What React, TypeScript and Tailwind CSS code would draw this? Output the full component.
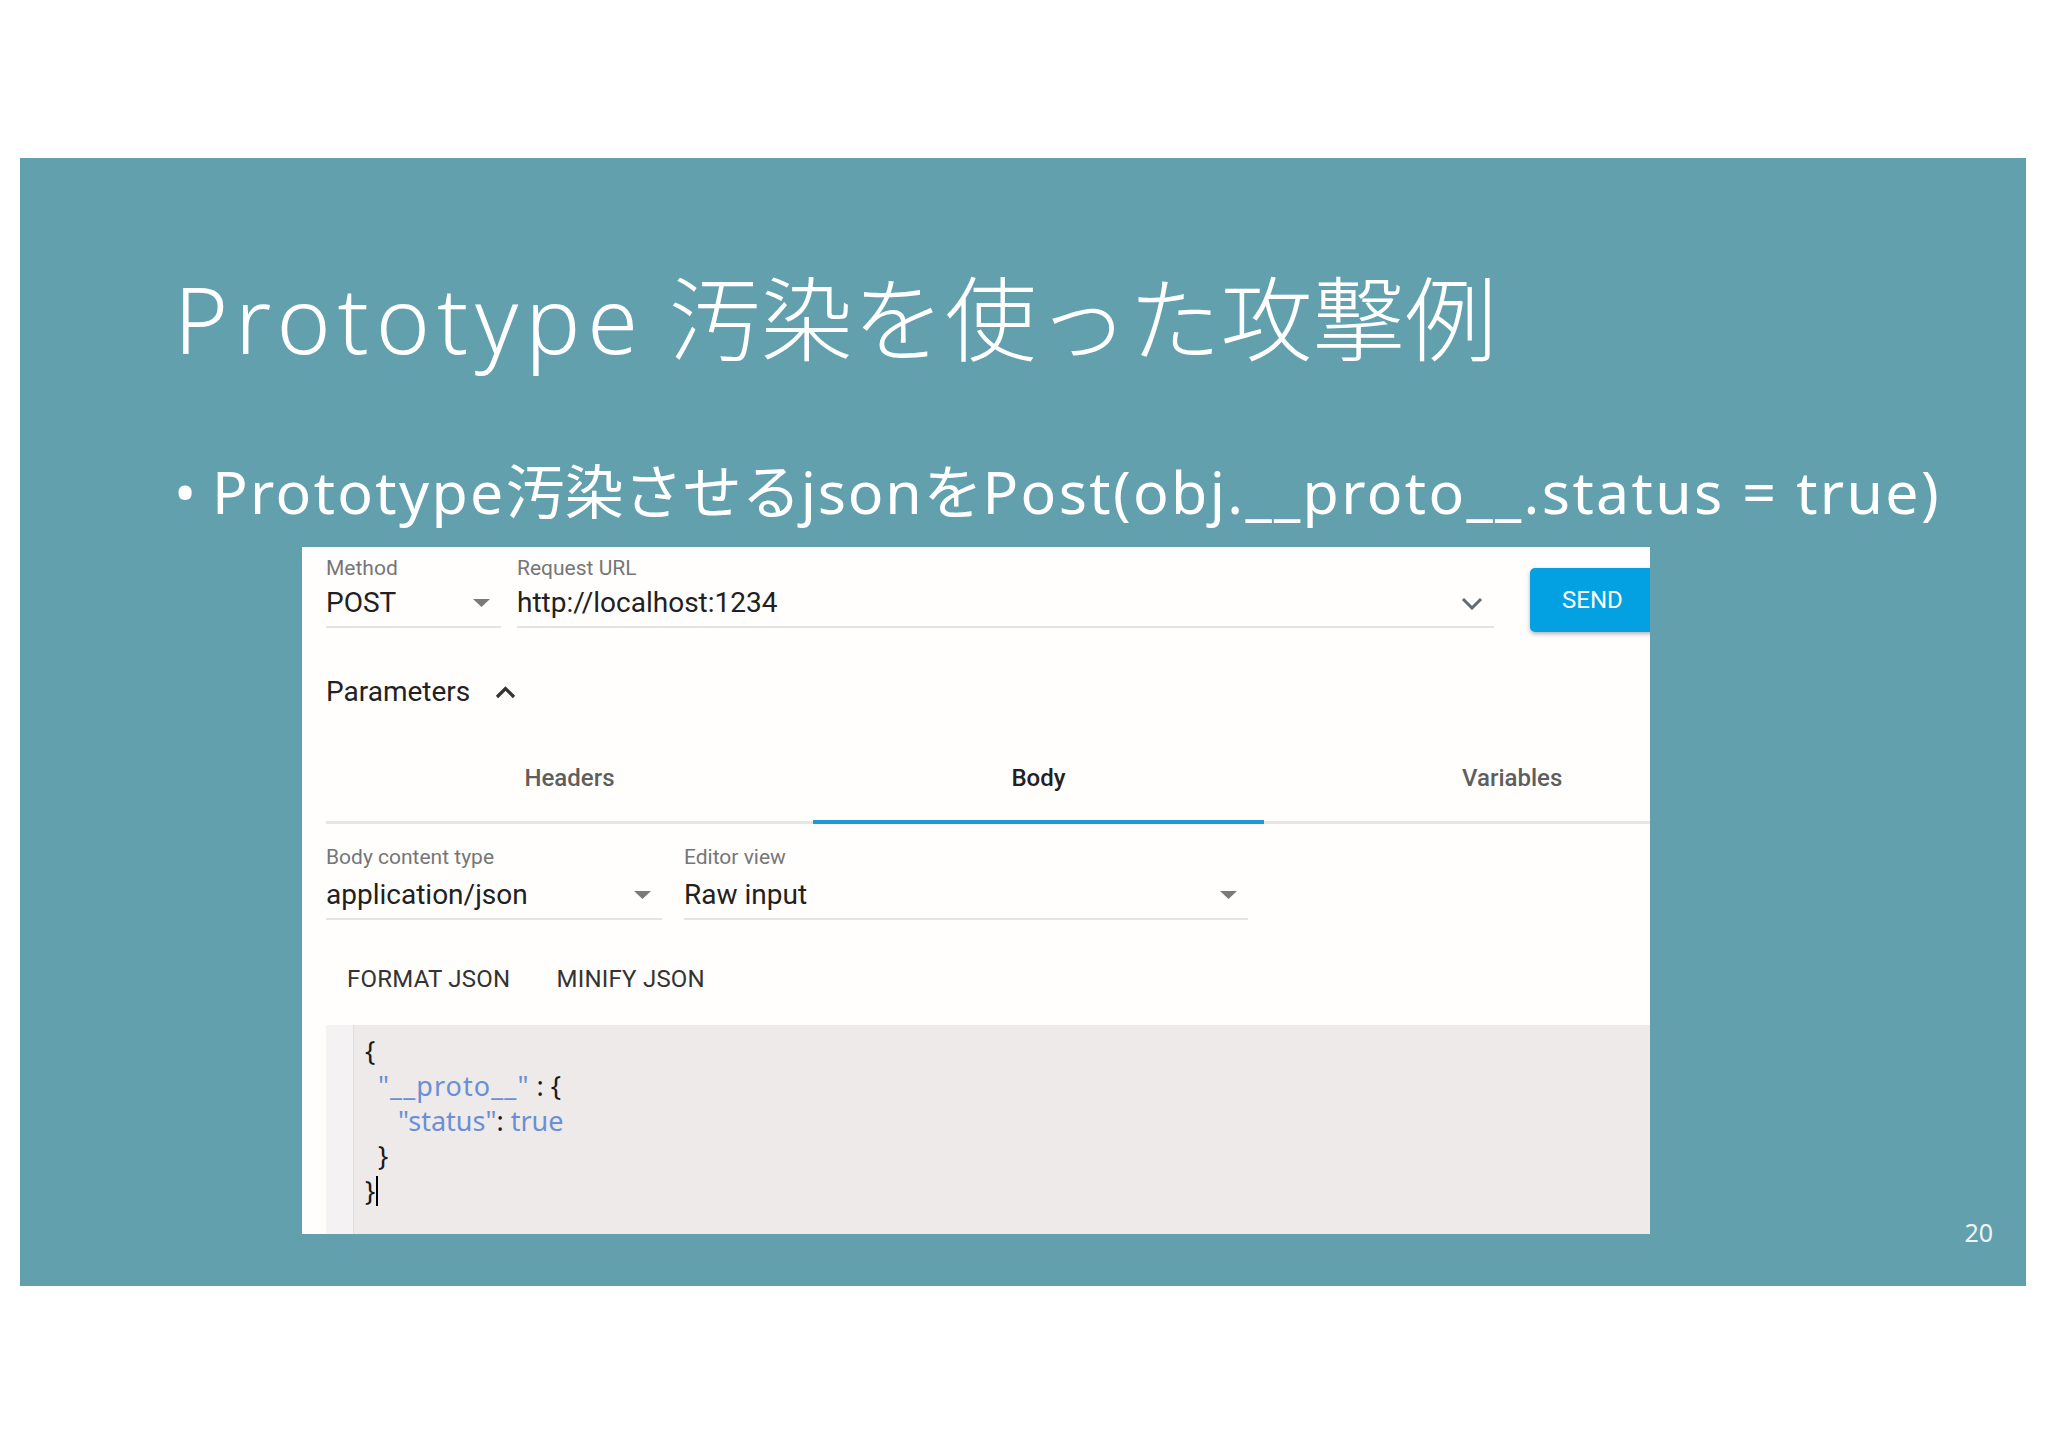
const sans = "font-['Noto_Sans','Noto_Sans_CJK_JP',sans-serif]";

function Triangle() {
  return (
    <svg width="17" height="8" viewBox="0 0 17 8" className="shrink-0">
      <polygon points="0,0 17,0 8.5,8" fill="#7a7a7a" />
    </svg>
  );
}

function ChevronDown() {
  return (
    <svg width="22" height="13" viewBox="0 0 22 13" className="shrink-0">
      <polyline points="2,2 11,11 20,2" fill="none" stroke="#5f6c74" strokeWidth="3" />
    </svg>
  );
}

function ChevronUp() {
  return (
    <svg width="21" height="13" viewBox="0 0 21 13" className="shrink-0">
      <polyline points="2,11 10.5,2.5 19,11" fill="none" stroke="#333333" strokeWidth="3.2" />
    </svg>
  );
}

function Field({
  label,
  value,
  icon,
  className,
  gapClass = "mt-[5px]",
}: {
  label: string;
  value: string;
  icon: React.ReactNode;
  className: string;
  gapClass?: string;
}) {
  return (
    <div className={className}>
      <div className="text-[21px] leading-[26px] text-[#767676]">{label}</div>
      <div className={`${gapClass} flex items-center justify-between border-b-2 border-[#e3e3e3] pb-[6px] pr-[11px]`}>
        <span className="text-[28px] leading-[34px] text-[#212121]">{value}</span>
        {icon}
      </div>
    </div>
  );
}

export default function App() {
  return (
    <div className="min-h-screen bg-white pl-[20px] pt-[158px]">
      <div className={`flex h-[1128px] w-[2006px] flex-col bg-[#63a0ae] pl-[154px] pt-[106px] text-white ${sans}`}>
        <h1 className="text-[92px] font-light leading-[110px]">
          <span className="tracking-[0.075em]">Prototype</span> 汚染を使った攻撃例
        </h1>

        <div className="mt-[81px] flex items-baseline text-[59px] leading-[72px]">
          <span className="w-[38px] shrink-0">•</span>
          <span>
            <span className="tracking-[0.04em]">Prototype</span>汚染させる
            <span className="tracking-[0.03em]">json</span>を
            <span className="tracking-[0.04em]">Post(obj.__proto__.status = true)</span>
          </span>
        </div>

        <div className="mt-[20px] flex items-end">
          <div className="ml-[128px] flex h-[687px] w-[1348px] flex-col overflow-hidden bg-[#fffefd] font-['Roboto',sans-serif]">
            <div className="flex items-start pl-[24px]">
              <Field label="Method" value="POST" icon={<Triangle />} className="w-[175px] shrink-0 pt-[8px]" />
              <Field
                label="Request URL"
                value="http://localhost:1234"
                icon={<ChevronDown />}
                className="ml-[16px] w-[977px] shrink-0 pt-[8px]"
              />
              <button className="ml-[36px] mt-[21px] h-[64px] w-[150px] shrink-0 rounded-[5px] bg-[#03a1e1] pl-[32px] text-left text-[24px] text-white shadow-[0_2px_4px_rgba(0,0,0,0.3)]">
                SEND
              </button>
            </div>

            <div className="mt-[43px] flex items-center pl-[24px]">
              <span className="text-[28px] leading-[34px] text-[#222]">Parameters</span>
              <span className="ml-[25px]">
                <ChevronUp />
              </span>
            </div>

            <div className="ml-[24px] mt-[54px] flex text-[24px] font-medium leading-[30px]">
              <div className="flex w-[487px] flex-col">
                <span className="text-center text-[#5e5e5e]">Headers</span>
                <div className="mt-[28px] h-[3px] bg-[#e6e6e6]" />
              </div>
              <div className="flex w-[451px] flex-col">
                <span className="text-center text-[#212121]">Body</span>
                <div className="mt-[27px] h-[4px] bg-[#1f9ad6]" />
              </div>
              <div className="flex flex-1 flex-col">
                <span className="pl-[198px] text-[#5e5e5e]">Variables</span>
                <div className="mt-[28px] h-[3px] bg-[#e6e6e6]" />
              </div>
            </div>

            <div className="mt-[20px] flex gap-[22px] pl-[24px]">
              <Field
                label="Body content type"
                value="application/json"
                icon={<Triangle />}
                className="w-[336px]"
                gapClass="mt-[8px]"
              />
              <Field label="Editor view" value="Raw input" icon={<Triangle />} className="w-[564px]" gapClass="mt-[8px]" />
            </div>

            <div className="mt-[44px] flex pl-[45px] text-[24px] leading-[30px] text-[#333]">
              <span className="tracking-[0.01em]">FORMAT JSON</span>
              <span className="ml-[46px] tracking-[0.01em]">MINIFY JSON</span>
            </div>

            <div className="ml-[24px] mt-[31px] flex flex-1">
              <div className="w-[28px] border-r border-[#e2dede] bg-[#f4f2f2]" />
              <div className={`flex-1 bg-[#eeeaea] pl-[11px] pt-[8px] text-[27px] leading-[35px] text-[#1a1a1a] ${sans}`}>
                <div>{"{"}</div>
                <div className="pl-[13px]">
                  <span className="tracking-[0.04em] text-[#6b8ed6]">"__proto__"</span> : {"{"}
                </div>
                <div className="pl-[33px]">
                  <span className="text-[#6b8ed6]">"status"</span>: <span className="text-[#6b8ed6]">true</span>
                </div>
                <div className="pl-[13px]">{"}"}</div>
                <div className="flex items-center">
                  <span>{"}"}</span>
                  <span className="ml-[1px] h-[30px] w-[2px] bg-black" />
                </div>
              </div>
            </div>
          </div>

          <span className="mb-[-13px] ml-auto mr-[33px] text-[25px] leading-[30px] text-[#eef5f6]">20</span>
        </div>
      </div>
    </div>
  );
}
